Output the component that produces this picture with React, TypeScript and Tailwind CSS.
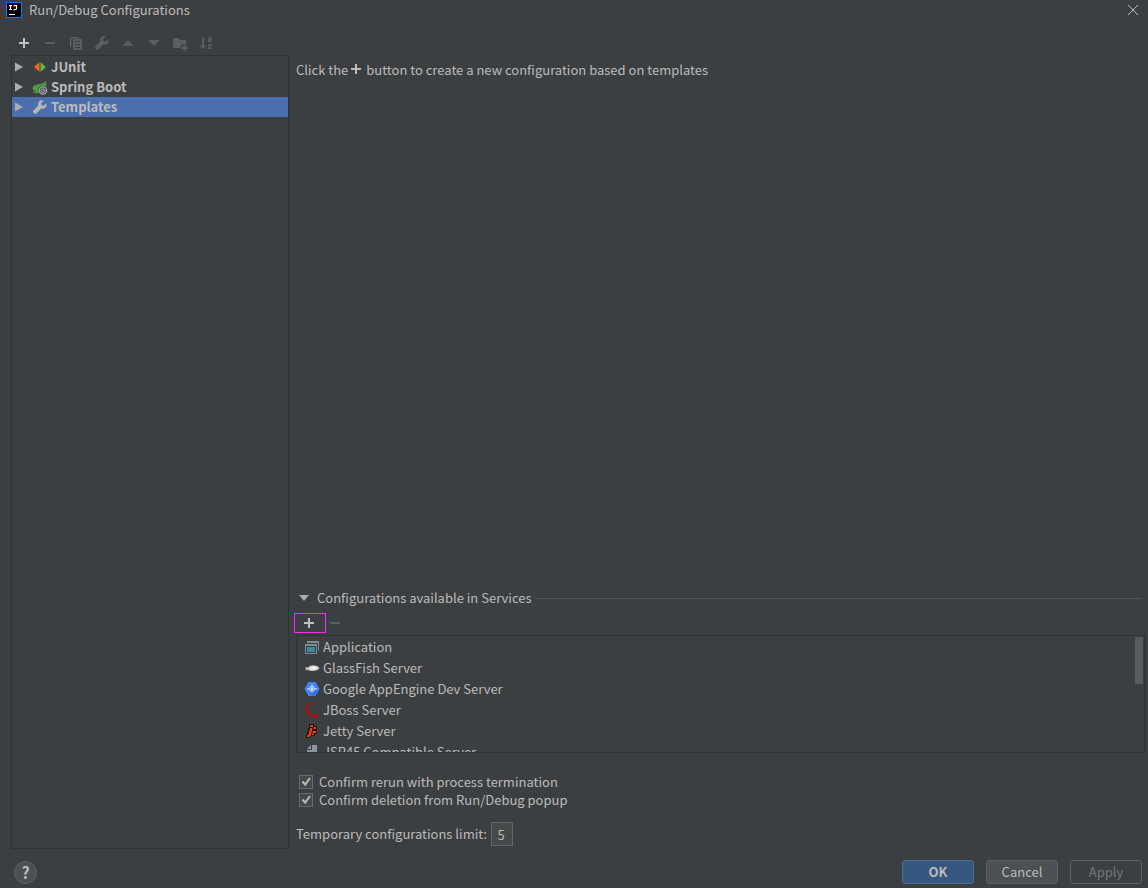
import { useState } from 'react';
import type { ReactNode } from 'react';
import clsx from 'clsx';

// ---------------------------------------------------------------------------
// Icons
// ---------------------------------------------------------------------------

interface IconProps {
  className?: string;
}

function Icon({ className, children }: IconProps & { children: ReactNode }) {
  return (
    <svg viewBox="0 0 16 16" fill="currentColor" aria-hidden="true" className={clsx('size-4 shrink-0', className)}>
      {children}
    </svg>
  );
}

const PlusIcon = ({ className }: IconProps) => (
  <Icon className={className}>
    <path d="M7 3h2v4h4v2H9v4H7V9H3V7h4z" />
  </Icon>
);

const MinusIcon = () => (
  <Icon>
    <path d="M3 7h10v2H3z" />
  </Icon>
);

const CopyIcon = () => (
  <Icon>
    <path d="M2 2h9v1.500H3.500V12H2z" />
    <path fillRule="evenodd" d="M5 4h9v11H5zM7 6v1h5V6zm0 3v1h5V9zm0 3v1h5v-1z" />
  </Icon>
);

const WrenchIcon = ({ className }: IconProps) => (
  <Icon className={className}>
    <path d="M14.200 4.200 11.700 6.700 9.600 6.300 9.200 4.200 11.700 1.700C10 1 8.200 1.400 7.100 2.600 6 3.700 5.800 5.200 6.300 6.600L1.600 11.300a1.700 1.700 0 0 0 0 2.500l.5.5a1.700 1.700 0 0 0 2.500 0l4.700-4.700c1.400.5 2.900.2 4-.9 1.200-1.100 1.500-2.900.9-4.500z" />
  </Icon>
);

const UpIcon = () => (
  <Icon>
    <path d="M2 11 8 5l6 6z" />
  </Icon>
);

const DownIcon = () => (
  <Icon>
    <path d="M2 5h12l-6 6z" />
  </Icon>
);

const NewFolderIcon = () => (
  <Icon>
    <path d="M1 3h5.500l1.500 2h6v4h-4v1.500H8.500V13H1z" />
    <path d="M11.500 9.500h2V12H16v2h-2.500v2h-2v-2H9.500v-2h2z" />
  </Icon>
);

const SortIcon = () => (
  <Icon>
    <path d="M4 2h2v8.500h2.500L5 14l-3.500-3.500H4z" />
    <g fill="none" stroke="currentColor" strokeWidth="1.300">
      <path d="M10 2.600h3v4.400M13 4.500h-2.400v1.900H13" />
      <path d="M10 9.600h3l-2.700 3.800h3.200" />
    </g>
  </Icon>
);

const JUnitIcon = () => (
  <Icon>
    <path fill="#f4632a" d="M7.500 3v10L2 8z" />
    <path fill="#62b543" d="M8.500 3v10L14 8z" />
  </Icon>
);

const SpringBootIcon = () => (
  <Icon>
    <path fill="#4f9a41" d="M13.800 2c.8 2.500.8 5 .2 7l-6 5c-2.500.6-5.500.4-7.600-1l3.600-.7C1.800 12 .2 10.500.6 8.500 1.400 4.500 11 6 13.800 2z" />
    <circle cx="11" cy="11.500" r="4.800" fill="#3c3f41" />
    <circle cx="11" cy="11.500" r="3.600" fill="none" stroke="#9aa7b0" strokeWidth="1.400" />
    <path d="M11 9v2.500M9.700 10.300a1.800 1.800 0 1 0 2.600 0" fill="none" stroke="#b5c0c7" />
  </Icon>
);

const ApplicationIcon = () => (
  <Icon>
    <path fill="#7f8b93" d="M3 2h12v10h-1V4H3z" />
    <path fill="#7f8b93" fillRule="evenodd" d="M1 5h12v10H1zm1 2v7h10V7z" />
    <path fill="#3d8aa6" d="M3 8h8v5H3z" />
  </Icon>
);

const GlassFishIcon = () => (
  <Icon>
    <path fill="#c9c9c9" d="M1 7l3 .5C5.500 6 8 5 11 5.500c2.200.3 3.800 1.300 4.500 2.500-.8 1.800-3.500 3-7 3-2 0-3.500-.4-4.800-1.300L1 10.500 2.200 9z" />
    <path fill="#f7efe0" d="M5.500 8c2-1.600 4.500-2 7.500-.8v1.500C10.500 10 8 10 5.500 9z" />
  </Icon>
);

const AppEngineIcon = () => (
  <Icon>
    <path fill="#4285f4" d="M4.500 1h7L15.500 8l-4 7h-7L.500 8z" />
    <path fill="#3872da" d="M11 8l3 2.600L11.500 15H8l-3-5z" />
    <path fill="none" stroke="#c2d8fc" strokeWidth="1.200" d="M8 5 11 8 8 11 5 8z" />
    <circle cx="8" cy="8" r="1.100" fill="#fff" />
    <path fill="#c2d8fc" d="M3 7.500h2v1H3zm8 0h2v1h-2zM7.500 3.500h1V5h-1z" />
  </Icon>
);

const JBossIcon = () => (
  <Icon>
    <g fill="#cc0000">
      <circle cx="12" cy="1.500" r=".8" />
      <circle cx="9" cy="1.500" r=".9" />
      <circle cx="6" cy="2" r="1" />
      <circle cx="3.500" cy="4" r="1.200" />
      <circle cx="2.800" cy="7.200" r="1.400" />
      <circle cx="4" cy="10.500" r="1.500" />
      <circle cx="7.300" cy="13.300" r="1.700" />
      <circle cx="11.800" cy="13.800" r="1.900" />
    </g>
  </Icon>
);

const JettyIcon = () => (
  <Icon>
    <path
      fill="#141414"
      d="M5 1h5v2h3v4h-1v1h1v3h-2v2H7v1H6v1H2v-4h1V9h1V5h1z"
    />
    <g fill="#fc390e">
      <path d="M6 2h3v2H6z" />
      <path d="M6 5h2.500L7 12 5.500 14H3v-2h1.500z" />
      <path d="M9.500 4H12v2H9.500zM8.800 8H12v2H8.500zM8 10.500h2V12H7.800z" />
    </g>
  </Icon>
);

const JspIcon = () => (
  <Icon>
    <path fill="#8a969e" d="M8 1h5v14H3V6h5z" />
    <path fill="#8a969e" d="M7 1v4H3z" />
  </Icon>
);

const IdeaLogo = () => (
  <svg viewBox="0 0 16 16" className="size-4 shrink-0" aria-hidden="true">
    <path fill="#087cfa" d="M0 0h16v16H0z" />
    <path fill="#000" d="M1 1h14v14H1z" />
    <path fill="#fff" d="M3 12h6v1H3z" />
    <path fill="none" stroke="#fff" strokeWidth="1.200" d="M3 3.600h3M4.500 3.600v4M3 7.500h3M7.500 3.600h3v3c0 .8-.5 1-1.200 1H7.500" />
  </svg>
);

// ---------------------------------------------------------------------------
// Data
// ---------------------------------------------------------------------------

const TOOLBAR = [
  { label: 'Add New Configuration', icon: <PlusIcon />, enabled: true },
  { label: 'Remove Configuration', icon: <MinusIcon />, enabled: false },
  { label: 'Copy Configuration', icon: <CopyIcon />, enabled: false },
  { label: 'Edit Templates', icon: <WrenchIcon />, enabled: false },
  { label: 'Move Up', icon: <UpIcon />, enabled: false },
  { label: 'Move Down', icon: <DownIcon />, enabled: false },
  { label: 'Create New Folder', icon: <NewFolderIcon />, enabled: false },
  { label: 'Sort Configurations', icon: <SortIcon />, enabled: false },
];

const TREE = [
  { name: 'JUnit', icon: <JUnitIcon /> },
  { name: 'Spring Boot', icon: <SpringBootIcon /> },
  { name: 'Templates', icon: <WrenchIcon className="text-[#b4b8bb]" /> },
];

const SERVICES = [
  { name: 'Application', icon: <ApplicationIcon /> },
  { name: 'GlassFish Server', icon: <GlassFishIcon /> },
  { name: 'Google AppEngine Dev Server', icon: <AppEngineIcon /> },
  { name: 'JBoss Server', icon: <JBossIcon /> },
  { name: 'Jetty Server', icon: <JettyIcon /> },
  { name: 'JSR45 Compatible Server', icon: <JspIcon /> },
];

// ---------------------------------------------------------------------------
// Parts
// ---------------------------------------------------------------------------

function TitleBar() {
  return (
    <header className="flex h-5 items-center gap-[7px] pl-1.5 pr-[7px]">
      <IdeaLogo />
      <h1 className="flex-1">Run/Debug Configurations</h1>
      <button type="button" aria-label="Close" className="flex size-4 items-center justify-center">
        <svg viewBox="0 0 10 10" className="size-2.5" fill="none" stroke="#c0c0c0" aria-hidden="true">
          <path d="M0 0l10 10M10 0 0 10" />
        </svg>
      </button>
    </header>
  );
}

function ConfigurationTree() {
  const [selected, setSelected] = useState('Templates');

  return (
    <aside className="flex w-[278px] shrink-0 flex-col">
      <div className="flex h-6 items-center">
        {TOOLBAR.map((item) => (
          <button
            key={item.label}
            type="button"
            aria-label={item.label}
            disabled={!item.enabled}
            className={clsx(
              'flex h-5 w-[26px] items-center justify-center',
              item.enabled ? 'text-[#c0c3c5]' : 'text-[#5b5e60]'
            )}
          >
            {item.icon}
          </button>
        ))}
      </div>
      <ul className="flex-1 border border-[#323232] pt-px font-bold">
        {TREE.map((node) => (
          <li key={node.name}>
            <button
              type="button"
              onClick={() => setSelected(node.name)}
              className={clsx('flex h-5 w-full items-center pl-0.5', selected === node.name && 'bg-[#4b6eaf]')}
            >
              <svg viewBox="0 0 10 10" className="size-2.5 shrink-0" fill="#adadad" aria-hidden="true">
                <path d="M1 .5v9L9 5z" />
              </svg>
              <span className="ml-2 mr-[3px]">{node.icon}</span>
              {node.name}
            </button>
          </li>
        ))}
      </ul>
    </aside>
  );
}

function ServicesPanel() {
  return (
    <section>
      <div className="flex h-5 items-center pr-1.5">
        <button type="button" className="flex items-center gap-2 pl-[3px]">
          <svg viewBox="0 0 10 10" className="size-2.5" fill="#adadad" aria-hidden="true">
            <path d="M0 2h10L5 8z" />
          </svg>
          Configurations available in Services
        </button>
        <span className="ml-1 h-px flex-1 bg-[#515456]" />
      </div>
      <div className="-ml-0.5 mb-0.5 mt-[5px] flex h-5 items-center gap-px">
        <button
          type="button"
          aria-label="Add service configuration"
          className="flex h-5 w-8 items-center border border-[#f32df3] pl-1.5 text-[#c0c3c5]"
        >
          <PlusIcon />
        </button>
        <button type="button" disabled aria-label="Remove service configuration" className="text-[#5b5e60]">
          <MinusIcon />
        </button>
      </div>
      <div className="mr-[3px] flex h-[118px] overflow-hidden border border-[#323232]">
        <ul className="flex-1 pl-[7px]">
          {SERVICES.map((service) => (
            <li key={service.name} className="flex h-[21px] items-center gap-[3px]">
              {service.icon}
              {service.name}
            </li>
          ))}
        </ul>
        <div className="mr-px mt-px h-[47px] w-2 bg-[#595b5d]" />
      </div>
    </section>
  );
}

function CheckOption({ label }: { label: string }) {
  return (
    <label className="flex h-[18px] items-center gap-1.5">
      <span className="grid size-3.5">
        <input
          type="checkbox"
          defaultChecked
          className="peer col-start-1 row-start-1 size-3.5 appearance-none border border-[#6b6b6b] bg-[#43494a]"
        />
        <svg
          viewBox="0 0 14 14"
          fill="none"
          stroke="#bbbbbb"
          strokeWidth="2"
          aria-hidden="true"
          className="pointer-events-none invisible col-start-1 row-start-1 size-3.5 peer-checked:visible"
        >
          <path d="M3.500 6.500 6.200 9.700 11 3" />
        </svg>
      </span>
      {label}
    </label>
  );
}

function Footer() {
  const base = 'h-6 w-[72px] rounded-[3px] border';

  return (
    <footer className="flex items-center gap-3 pb-1 pl-3.5 pr-1.5 pt-[11px]">
      <button
        type="button"
        aria-label="Help"
        className="mr-auto size-[23px] rounded-full border border-[#5e6060] bg-[#4c5052] text-base/5 font-bold"
      >
        ?
      </button>
      <button type="button" className={clsx(base, 'border-[#4c708c] bg-[#365880] font-bold')}>
        OK
      </button>
      <button type="button" className={clsx(base, 'border-[#5e6060] bg-[#4c5052]')}>
        Cancel
      </button>
      <button type="button" disabled className={clsx(base, 'border-[#5e6060] text-[#777777]')}>
        Apply
      </button>
    </footer>
  );
}

// ---------------------------------------------------------------------------
// App
// ---------------------------------------------------------------------------

export default function App() {
  return (
    <div className="flex min-h-screen flex-col bg-[#3c3f41] font-['Noto_Sans_CJK_SC','Noto_Sans',sans-serif] text-[13px]/[18px] text-[#bbbbbb]">
      <TitleBar />
      <div className="flex flex-1 gap-[7px] pl-[11px] pt-[11px]">
        <ConfigurationTree />
        <main className="flex min-w-0 flex-1 flex-col">
          <p className="mt-[30px] flex flex-1 items-start">
            Click the
            <PlusIcon className="mr-0.5" />
            button to create a new configuration based on templates
          </p>
          <ServicesPanel />
          <div className="mt-5 pl-[3px]">
            <CheckOption label="Confirm rerun with process termination" />
            <CheckOption label="Confirm deletion from Run/Debug popup" />
          </div>
          <label className="mb-[3px] mt-[13px] flex items-center gap-1">
            Temporary configurations limit:
            <input
              type="text"
              defaultValue="5"
              className="h-6 w-[22px] border border-[#646464] bg-[#45494a] pr-0.5 text-center"
            />
          </label>
        </main>
      </div>
      <Footer />
    </div>
  );
}
